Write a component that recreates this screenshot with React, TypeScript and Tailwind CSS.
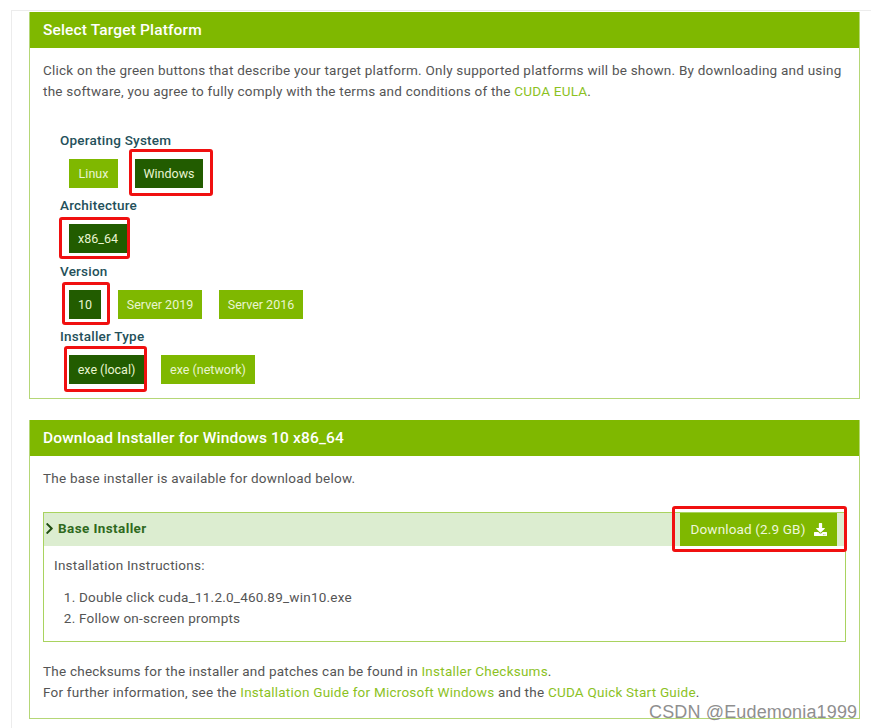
import { FaChevronRight, FaDownload } from 'react-icons/fa';

type Opt = {
  label: string;
  active?: boolean;
  w: string;
  // red marker drawn over the button
  mark?: string;
};

const groups: { title: string; opts: Opt[] }[] = [
  {
    title: 'Operating System',
    opts: [
      { label: 'Linux', w: 'w-[49px]' },
      { label: 'Windows', active: true, w: 'w-[68px]', mark: '-left-[6px] -right-[10px] -top-[10px] -bottom-[8px]' },
    ],
  },
  {
    title: 'Architecture',
    opts: [{ label: 'x86_64', active: true, w: 'w-[58px]', mark: '-left-[10px] -right-[3px] -top-[7px] -bottom-[6px]' }],
  },
  {
    title: 'Version',
    opts: [
      { label: '10', active: true, w: 'w-[32px]', mark: '-left-[7px] -right-[9px] -top-[8px] -bottom-[6px]' },
      { label: 'Server 2019', w: 'w-[84px]' },
      { label: 'Server 2016', w: 'w-[84px]' },
    ],
  },
  {
    title: 'Installer Type',
    opts: [
      { label: 'exe (local)', active: true, w: 'w-[75px]', mark: '-left-[5px] -right-[3px] -top-[9px] -bottom-[8px]' },
      { label: 'exe (network)', w: 'w-[94px]' },
    ],
  },
];

function PlatformButton({ opt }: { opt: Opt }) {
  return (
    <div
      className={`relative flex h-[29px] items-center justify-center text-[12.5px] tracking-normal text-[#e9f5d0] ${opt.w} ${
        opt.active ? 'bg-[#225c00]' : 'bg-[#7fb800]'
      }`}
    >
      {opt.label}
      {opt.mark && (
        <span className={`absolute rounded-[3px] border-[3px] border-[#f01010] ${opt.mark}`} />
      )}
    </div>
  );
}

function PanelHeader({ children }: { children: string }) {
  return (
    <div className="flex h-9 items-center bg-[#7fb800] pl-[13px] text-[15.5px] font-medium tracking-[0.15px] text-white">
      {children}
    </div>
  );
}

export default function App() {
  return (
    <div
      className="relative h-[728px] w-[871px] overflow-hidden bg-white text-[13.5px] leading-[21px] tracking-[0.23px] text-[#555]"
      style={{ fontFamily: 'Roboto, "Liberation Sans", sans-serif' }}
    >
      {/* page edge */}
      <div className="ml-[11px] mt-[10px] h-[718px] w-[860px] border-l border-t border-[#ececec] pl-[17px] pt-px">
        {/* select platform */}
        <section className="w-[831px] border border-t-0 border-[#b5d777]">
          <PanelHeader>Select Target Platform</PanelHeader>
          <div className="h-[350px] px-[13px] pt-3">
            <p>
              Click on the green buttons that describe your target platform. Only supported platforms will be shown. By
              downloading and using the software, you agree to fully comply with the terms and conditions of the{' '}
              <span className="text-[#8cc21f]">CUDA EULA</span>.
            </p>
            <div className="mt-7 pl-[17px]">
              {groups.map((g) => (
                <div key={g.title} className="mb-[7.4px]">
                  <div className="h-[20px] font-medium text-[#24505a]">{g.title}</div>
                  <div className="ml-[9px] mt-[9px] flex gap-[17px]">
                    {g.opts.map((o) => (
                      <PlatformButton key={o.label} opt={o} />
                    ))}
                  </div>
                </div>
              ))}
            </div>
          </div>
        </section>

        {/* download */}
        <section className="mt-[21px] h-[299px] w-[831px] border border-t-0 border-[#b5d777]">
          <PanelHeader>Download Installer for Windows 10 x86_64</PanelHeader>
          <div className="px-[13px] pt-3">
            <p>The base installer is available for download below.</p>
            <div className="mt-[23px] h-[130px] w-[803px] border border-[#a9d35f]">
              <div className="flex h-[33px] items-center justify-between bg-[#dcedd0] pr-[8px]">
                <div className="flex items-center pb-0.5 font-bold tracking-[0.4px] text-[#2f6a1e]">
                  <FaChevronRight className="-ml-[1px] mr-[2px] text-[13px] text-[#1f4d10]" />
                  Base Installer
                </div>
                <div className="relative flex h-[33px] w-[157px] items-center justify-center gap-2 bg-[#7fb800] tracking-[0.15px] text-[#eef7da]">
                  Download (2.9 GB)
                  <FaDownload className="text-[13px] text-white" />
                  <span className="absolute -bottom-[6px] -left-[8px] -right-[10px] -top-[7px] rounded-[3px] border-[3px] border-[#f01010]" />
                </div>
              </div>
              <div className="px-[10px] pt-[9px]">
                <p>Installation Instructions:</p>
                <ol className="mt-[11px] list-decimal pl-[25px]">
                  <li>Double click cuda_11.2.0_460.89_win10.exe</li>
                  <li>Follow on-screen prompts</li>
                </ol>
              </div>
            </div>
            <p className="mt-[19px]">
              The checksums for the installer and patches can be found in{' '}
              <span className="text-[#8cc21f]">Installer Checksums</span>.
            </p>
            <p>
              For further information, see the{' '}
              <span className="text-[#8cc21f]">Installation Guide for Microsoft Windows</span> and the{' '}
              <span className="text-[#8cc21f]">CUDA Quick Start Guide</span>.
            </p>
          </div>
        </section>
      </div>

      {/* watermark */}
      <div
        className="absolute left-[649px] top-[701px] text-[18px] leading-[22px] tracking-[0.15px] text-[#8f8f8f]"
        style={{ fontFamily: '"Liberation Sans", sans-serif' }}
      >
        CSDN @Eudemonia1999
      </div>
    </div>
  );
}
